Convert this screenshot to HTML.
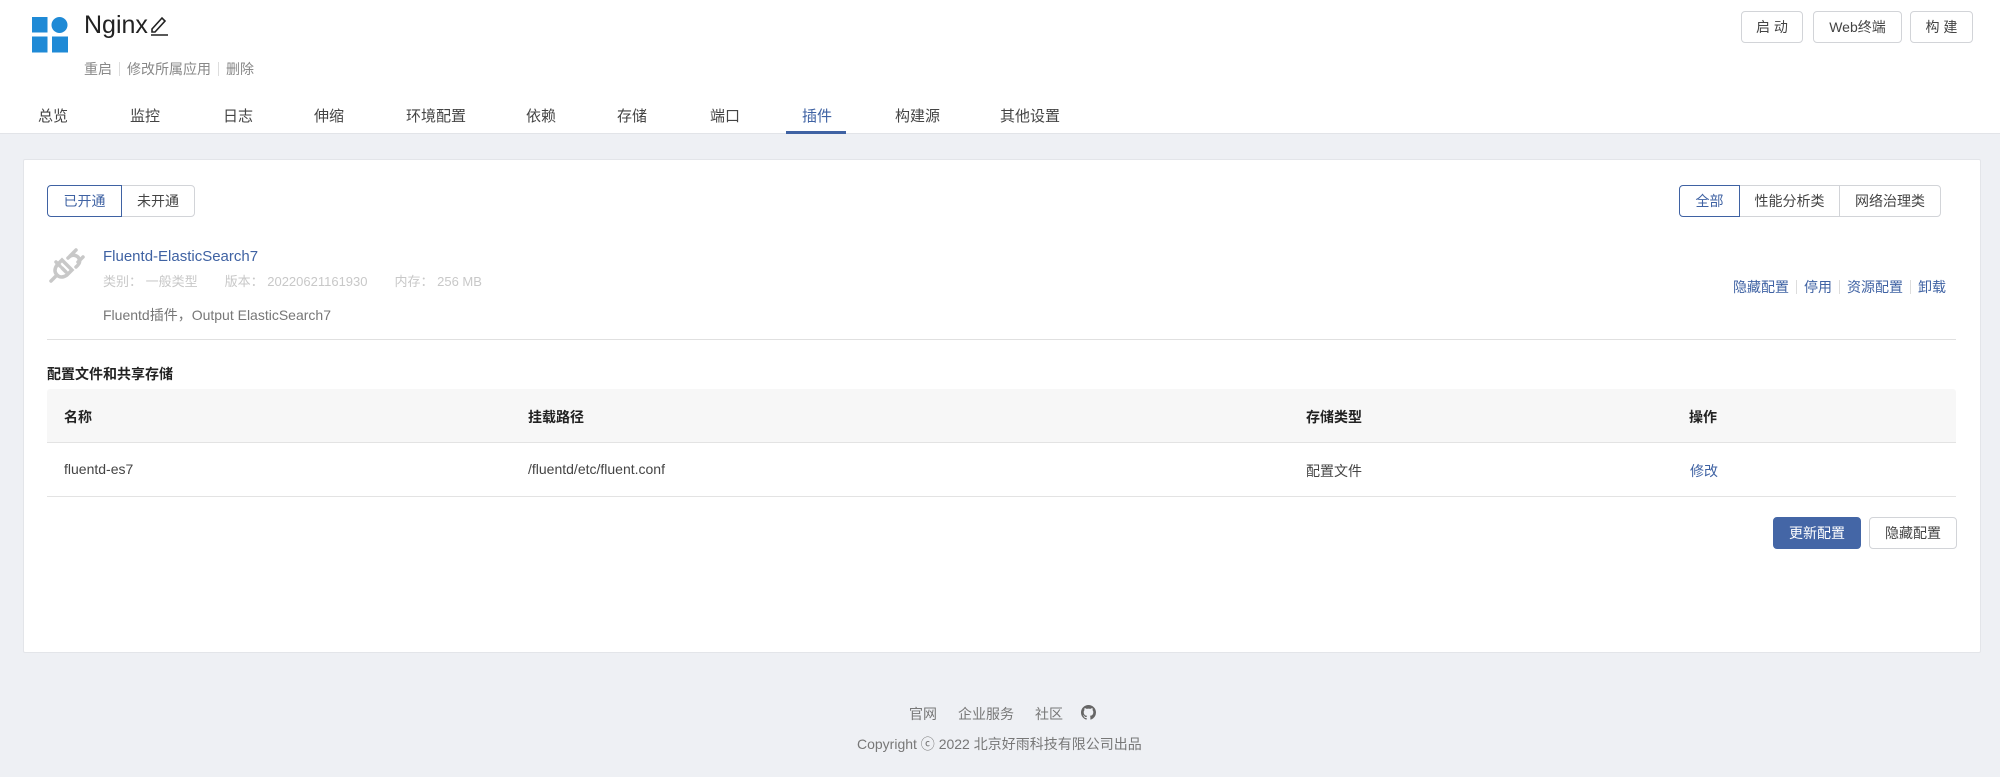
<!DOCTYPE html>
<html><head><meta charset="utf-8"><style>
*{margin:0;padding:0;box-sizing:border-box}
body{width:2000px;height:777px;background:#eef0f4;font-family:"Liberation Sans","Noto Sans CJK SC",sans-serif;color:#333;position:relative;overflow:hidden}
.a{position:absolute;white-space:nowrap}
.hdr{position:absolute;left:0;top:0;width:2000px;height:134px;background:#fff;border-bottom:1px solid #e2e4e8}
.btn{position:absolute;border:1px solid #d2d4d8;border-radius:4px;background:#fff;font-size:14px;color:#444;text-align:center;line-height:30px}
.tab{position:absolute;top:105px;font-size:15px;color:#444}
.blue{color:#3f62a3}
.card{position:absolute;left:23px;top:159px;width:1958px;height:494px;background:#fff;border:1px solid #e3e5e9;border-radius:2px}
.sep{display:inline-block;width:1px;height:14px;background:#ddd;margin:0 7px;vertical-align:-2px}
</style></head><body>
<div class="hdr"></div>
<svg class="a" style="left:32px;top:17px" width="36" height="36" viewBox="0 0 36 36">
<rect x="0" y="0" width="15.5" height="15.5" fill="#1f8ad6"/><circle cx="27.5" cy="8" r="8" fill="#1f8ad6"/>
<rect x="0" y="19.5" width="15.5" height="16" fill="#1f8ad6"/><rect x="20" y="19.5" width="16" height="16" fill="#1f8ad6"/></svg>
<div class="a" style="left:84px;top:11px;font-size:25px;color:#222">Nginx</div>
<svg class="a" style="left:148px;top:14px" width="22" height="22" viewBox="0 0 22 22"><path d="M4 15 L14 4 L17 7 L7 18 L4 18 Z" fill="none" stroke="#222" stroke-width="1.6"/><path d="M3 21 H20" stroke="#222" stroke-width="1.6"/></svg>
<div class="a" style="left:84px;top:59px;font-size:14px;color:#888">重启<span class="sep"></span>修改所属应用<span class="sep"></span>删除</div>
<div class="tab" style="left:38px">总览</div><div class="tab" style="left:130px">监控</div><div class="tab" style="left:223px">日志</div><div class="tab" style="left:314px">伸缩</div><div class="tab" style="left:406px">环境配置</div><div class="tab" style="left:526px">依赖</div><div class="tab" style="left:617px">存储</div><div class="tab" style="left:710px">端口</div><div class="tab blue" style="left:802px">插件</div><div class="tab" style="left:895px">构建源</div><div class="tab" style="left:1000px">其他设置</div>
<div class="a" style="left:786px;top:131px;width:60px;height:3px;background:#3f62a3"></div>
<div class="btn" style="left:1741px;top:11px;width:62px;height:32px">启 动</div>
<div class="btn" style="left:1813px;top:11px;width:89px;height:32px">Web终端</div>
<div class="btn" style="left:1910px;top:11px;width:63px;height:32px">构 建</div>
<div class="card"></div>
<div class="btn blue" style="left:47px;top:185px;width:75px;height:32px;border-color:#3f62a3;border-radius:4px 0 0 4px;z-index:2">已开通</div>
<div class="btn" style="left:121px;top:185px;width:74px;height:32px;border-radius:0 4px 4px 0">未开通</div>
<div class="btn blue" style="left:1679px;top:185px;width:61px;height:32px;border-color:#3f62a3;border-radius:4px 0 0 4px;z-index:2">全部</div>
<div class="btn" style="left:1739px;top:185px;width:101px;height:32px;border-radius:0">性能分析类</div>
<div class="btn" style="left:1839px;top:185px;width:102px;height:32px;border-radius:0 4px 4px 0">网络治理类</div>
<svg class="a" style="left:48px;top:248px" width="38" height="36" viewBox="0 0 38 36"><g fill="none" stroke="#c8c8c8" stroke-width="3.5" stroke-linecap="round">
<path d="M14 12 L24 22 L19 27 Q13 31 9 27 Q5 23 9 17 Z"/><path d="M9 27 L3 33"/><path d="M12 18 L8 14"/><path d="M18 24 L14 20"/>
<path d="M22 8 L28 2 M30 14 L35 9"/><path d="M20 10 Q25 5 30 9 Q34 14 28 19"/></g></svg>
<div class="a blue" style="left:103px;top:248px;font-size:15px">Fluentd-ElasticSearch7</div>
<div class="a" style="left:103px;top:271px;font-size:13px;color:#c8c8c8">类别：&nbsp;一般类型<span style="margin-left:27px">版本：&nbsp;20220621161930</span><span style="margin-left:27px">内存：&nbsp;256 MB</span></div>
<div class="a" style="left:103px;top:305px;font-size:14px;color:#777">Fluentd插件，Output ElasticSearch7</div>
<div class="a blue" style="left:1733px;top:277px;font-size:14px">隐藏配置<span class="sep"></span>停用<span class="sep"></span>资源配置<span class="sep"></span>卸载</div>
<div class="a" style="left:47px;top:339px;width:1909px;height:1px;background:#e0e0e0"></div>
<div class="a" style="left:47px;top:364px;font-size:14px;font-weight:bold;color:#222">配置文件和共享存储</div>
<div class="a" style="left:47px;top:389px;width:1909px;height:54px;background:#f7f7f7;border-bottom:1px solid #e3e3e3;border-radius:3px 3px 0 0"></div>
<div class="a" style="left:64px;top:407px;font-size:14px;font-weight:bold;color:#222">名称</div>
<div class="a" style="left:528px;top:407px;font-size:14px;font-weight:bold;color:#222">挂载路径</div>
<div class="a" style="left:1306px;top:407px;font-size:14px;font-weight:bold;color:#222">存储类型</div>
<div class="a" style="left:1689px;top:407px;font-size:14px;font-weight:bold;color:#222">操作</div>
<div class="a" style="left:64px;top:461px;font-size:14px;color:#444">fluentd-es7</div>
<div class="a" style="left:528px;top:461px;font-size:14px;color:#444">/fluentd/etc/fluent.conf</div>
<div class="a" style="left:1306px;top:461px;font-size:14px;color:#444">配置文件</div>
<div class="a blue" style="left:1690px;top:461px;font-size:14px">修改</div>
<div class="a" style="left:47px;top:496px;width:1909px;height:1px;background:#e3e3e3"></div>
<div class="btn" style="left:1773px;top:517px;width:88px;height:32px;background:#4466a6;border-color:#4466a6;color:#fff">更新配置</div>
<div class="btn" style="left:1869px;top:517px;width:88px;height:32px">隐藏配置</div>
<div class="a" style="left:909px;top:704px;font-size:14px;color:#777">官网<span style="margin-left:21px">企业服务</span><span style="margin-left:21px">社区</span></div>
<svg class="a" style="left:1081px;top:705px" width="15" height="15" viewBox="0 0 16 16"><path fill="#666" d="M8 0C3.58 0 0 3.58 0 8c0 3.540 2.29 6.530 5.470 7.590.4.07.55-.17.55-.38 0-.19-.01-.82-.01-1.49-2.010.37-2.530-.49-2.690-.94-.09-.23-.48-.94-.82-1.130-.28-.15-.68-.52-.01-.53.63-.01 1.080.58 1.230.82.72 1.210 1.870.87 2.330.66.07-.52.28-.87.51-1.070-1.780-.2-3.640-.89-3.640-3.950 0-.87.31-1.590.82-2.150-.08-.2-.36-1.020.08-2.120 0 0 .67-.21 2.200.82.64-.18 1.320-.27 2-.27.68 0 1.360.09 2 .27 1.530-1.040 2.200-.82 2.200-.82.44 1.100.16 1.920.08 2.120.51.56.82 1.270.82 2.150 0 3.070-1.870 3.750-3.650 3.950.29.25.54.73.54 1.480 0 1.070-.01 1.930-.01 2.200 0 .21.15.46.55.38A8.013 8.013 0 0016 8c0-4.420-3.580-8-8-8z"/></svg>
<div class="a" style="left:857px;top:734px;font-size:14px;color:#777">Copyright ⓒ 2022 北京好雨科技有限公司出品</div>
</body></html>
